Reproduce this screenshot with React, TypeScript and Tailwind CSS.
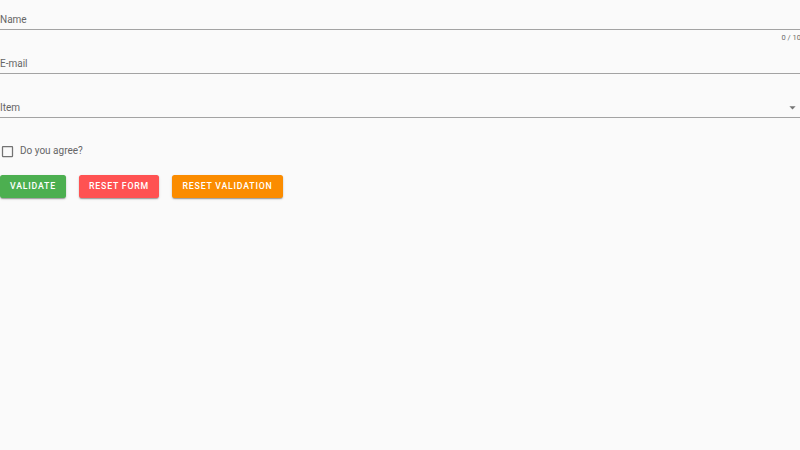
import React from "react";

function Field({ label, counter, select }: { label: string; counter?: boolean; select?: boolean }) {
  return (
    <div className="flex flex-col pt-[10px]">
      <div className="relative flex h-[19px] items-center pt-[2px]">
        <span className="text-[10px] leading-[12.5px] text-[#666666]">{label}</span>
        {select && (
          <svg className="absolute right-0 top-[2px]" width="15" height="15" viewBox="0 0 24 24">
            <path d="M7,10L12,15L17,10H7Z" fill="#757575" />
          </svg>
        )}
      </div>
      <div className="h-px bg-[#a3a3a3]" />
      <div className="flex h-[13.75px] justify-end">
        {counter && (
          <span className="mr-[-1px] mt-[4px] text-[7.5px] leading-[7.5px] text-[#6a6a6a] whitespace-nowrap">0 / 10</span>
        )}
      </div>
    </div>
  );
}

const btn =
  "flex h-[22.5px] items-center justify-center rounded-[2.5px] text-[8.75px] font-medium uppercase tracking-[0.09em] text-white shadow-[0_1.5px_1px_-1px_rgba(0,0,0,0.2),0_1px_1.5px_0_rgba(0,0,0,0.14),0_1px_3px_0_rgba(0,0,0,0.12)]";

export default function App() {
  return (
    <div className="h-[450px] w-[800px] overflow-hidden bg-[#fafafa]" style={{ fontFamily: "Roboto, 'Liberation Sans', sans-serif" }}>
      <Field label="Name" counter />
      <Field label="E-mail" />
      <Field label="Item" select />
      <div className="mt-[12.5px] flex h-[15px] items-center">
        <svg width="15" height="15" viewBox="0 0 24 24">
          <path
            d="M19,3H5C3.89,3 3,3.89 3,5V19A2,2 0 0,0 5,21H19A2,2 0 0,0 21,19V5C21,3.89 20.1,3 19,3M19,5V19H5V5H19Z"
            fill="#737373"
          />
        </svg>
        <span className="ml-[5px] text-[10px] leading-[12.5px] text-[#666666]">Do you agree?</span>
      </div>
      <div className="mt-[16.25px] flex gap-[13px]">
        <button className={`${btn} w-[66px] bg-[#4caf50]`}>Validate</button>
        <button className={`${btn} w-[80px] bg-[#ff5252]`}>Reset Form</button>
        <button className={`${btn} w-[111px] bg-[#fb8c00]`}>Reset Validation</button>
      </div>
    </div>
  );
}
